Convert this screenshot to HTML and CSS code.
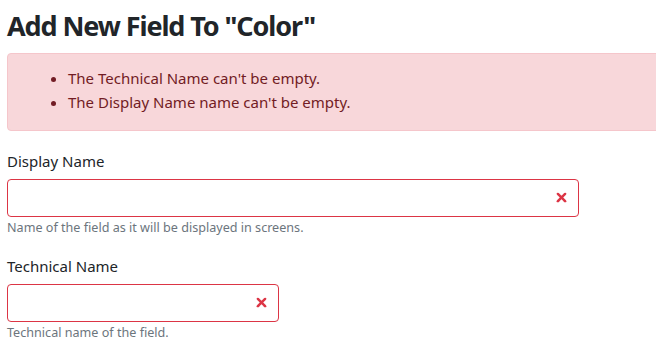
FILE: index.html
```html
<!DOCTYPE html>
<html lang="en">
  <head>
    <meta charset="UTF-8" />
    <meta name="viewport" content="width=device-width, initial-scale=1.0" />
    <title>Add New Field</title>
    <link rel="stylesheet" href="styles.css">
  </head>
  <body>
    <div class="page">
      <h2 class="title">Add New Field To "Color"</h2>

      <div class="alert">
        <ul>
          <li>The Technical Name can't be empty.</li>
          <li>The Display Name name can't be empty.</li>
        </ul>
      </div>

      <form>
        <div class="formGroup">
          <label for="displayName">Display Name</label>
          <div class="inputWrap wide">
            <input type="text" id="displayName" class="field" />
            <svg class="invalidIcon" viewBox="-2 -2 7 7" xmlns="http://www.w3.org/2000/svg">
              <path d="M0 0l3 3m0-3L0 3" />
              <circle r=".5" /><circle cx="3" r=".5" />
              <circle cy="3" r=".5" /><circle cx="3" cy="3" r=".5" />
            </svg>
          </div>
          <small class="help">Name of the field as it will be displayed in screens.</small>
        </div>

        <div class="formGroup">
          <label for="technicalName">Technical Name</label>
          <div class="inputWrap narrow">
            <input type="text" id="technicalName" class="field" />
            <svg class="invalidIcon" viewBox="-2 -2 7 7" xmlns="http://www.w3.org/2000/svg">
              <path d="M0 0l3 3m0-3L0 3" />
              <circle r=".5" /><circle cx="3" r=".5" />
              <circle cy="3" r=".5" /><circle cx="3" cy="3" r=".5" />
            </svg>
          </div>
          <small class="help">Technical name of the field.</small>
        </div>
      </form>
    </div>
  </body>
</html>
```

FILE: styles.css
```css
html,
body {
  margin: 0;
  overflow: hidden;
}
body {
  font-family: "Noto Sans", "Open Sans", sans-serif;
  font-size: 15px;
  line-height: 24px;
  color: #212529;
  background: #fff;
}
.page {
  padding: 6px 0 0 7px;
}
.title {
  margin: 0 0 8px;
  font-size: 27px;
  line-height: 39px;
  font-weight: 700;
  letter-spacing: -1.1px;
}
.alert {
  margin: 0 -20px 18px 0;
  padding: 12px 20px 16px;
  background-color: #f8d7da;
  border: 1px solid #f5c6cb;
  border-radius: 4px;
  color: #721c24;
}
.alert ul {
  margin: 0;
  padding-left: 40px;
}
.formGroup {
  margin-bottom: 17px;
}
.formGroup label {
  display: block;
  margin-bottom: 6px;
}
.inputWrap {
  position: relative;
}
.wide {
  width: 572px;
}
.narrow {
  width: 272px;
}
.field {
  display: block;
  box-sizing: border-box;
  width: 100%;
  height: 38px;
  padding: 6px 36px 6px 12px;
  font: inherit;
  border: 1px solid #dc3545;
  border-radius: 4px;
  outline: none;
}
.invalidIcon {
  position: absolute;
  right: 9px;
  top: 10px;
  width: 17px;
  height: 17px;
  fill: #dc3545;
  stroke: #dc3545;
}
.invalidIcon circle {
  stroke: none;
}
.help {
  display: block;
  margin-top: 1px;
  font-size: 12.6px;
  line-height: 19px;
  color: #6c757d;
}
```
